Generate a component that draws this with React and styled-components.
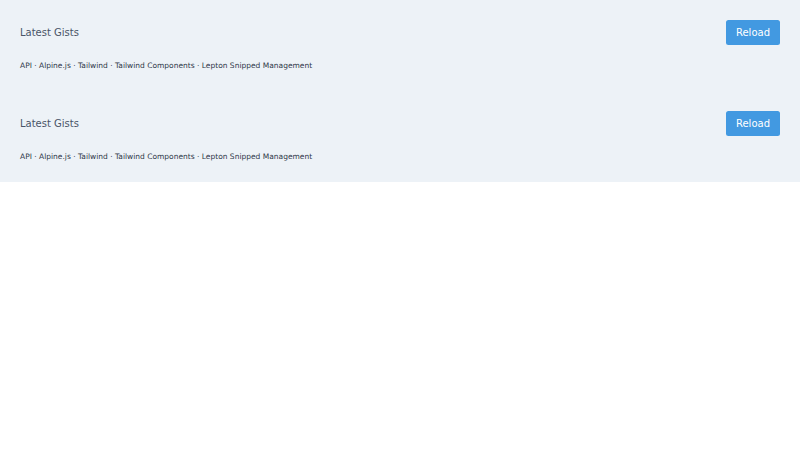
import React from "react";
import styled, { createGlobalStyle } from "styled-components";

const GlobalStyle = createGlobalStyle`
  html, body {
    margin: 0;
    padding: 0;
    background: #ffffff;
    font-family: "DejaVu Sans", "Liberation Sans", sans-serif;
  }
  * { box-sizing: border-box; }
`;

const Page = styled.div`
  display: flex;
  flex-direction: column;
  width: 800px;
`;

const Section = styled.section`
  background: #edf2f7;
  padding: 20px;
  display: flex;
  flex-direction: column;
`;

const Header = styled.div`
  display: flex;
  align-items: center;
  justify-content: space-between;
  height: 25px;
  margin-bottom: 16px;
`;

const Title = styled.h2`
  margin: 0;
  font-size: 10px;
  font-weight: 400;
  line-height: 15px;
  color: #4a5568;
`;

const ReloadButton = styled.button`
  font-family: inherit;
  font-size: 10px;
  line-height: 15px;
  height: 25px;
  padding: 0 10px;
  border: none;
  border-radius: 2.5px;
  background: #4299e1;
  color: #ffffff;
  cursor: pointer;
`;

const Tags = styled.p`
  margin: 0;
  font-size: 7.5px;
  line-height: 10px;
  color: #2d3748;
`;

const tags = ["API", "Alpine.js", "Tailwind", "Tailwind Components", "Lepton Snipped Management"];

function GistSection() {
  return (
    <Section>
      <Header>
        <Title>Latest Gists</Title>
        <ReloadButton>Reload</ReloadButton>
      </Header>
      <Tags>{tags.join(" · ")}</Tags>
    </Section>
  );
}

export default function App() {
  return (
    <>
      <GlobalStyle />
      <Page>
        <GistSection />
        <GistSection />
      </Page>
    </>
  );
}
